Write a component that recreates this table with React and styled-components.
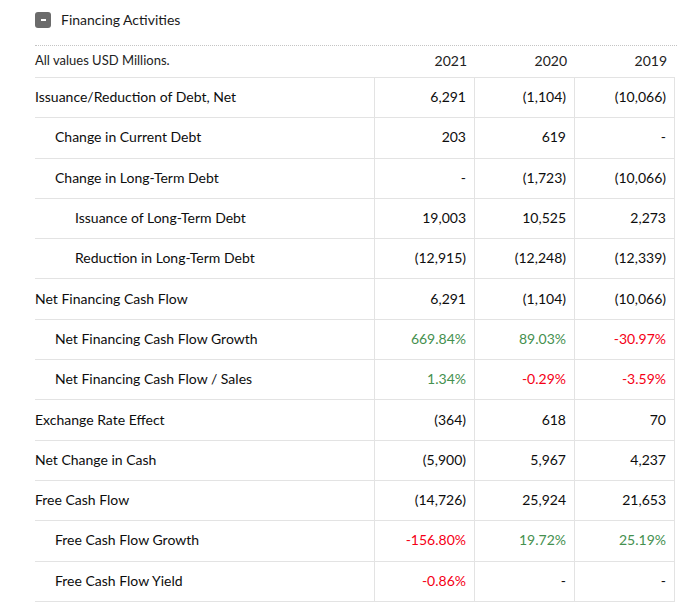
import React from "react";
import styled, { createGlobalStyle } from "styled-components";

const Global = createGlobalStyle`
  html, body { margin: 0; padding: 0; background: #fff; }
  body { font-family: Lato, "Open Sans", sans-serif; color: #111; }
`;

const Wrap = styled.div`
  padding: 10px 0 0 35px;
  width: 642px;
`;

const TitleBar = styled.div`
  display: flex;
  align-items: center;
  gap: 10px;
  height: 20px;
  padding-bottom: 15px;
  border-bottom: 1px dotted #c4c4c4;
`;

const Toggle = styled.span`
  width: 16px;
  height: 16px;
  border-radius: 3px;
  background: #6b6b6b;
  display: flex;
  align-items: center;
  justify-content: center;
  &::after {
    content: "";
    width: 5px;
    height: 2px;
    background: #fff;
  }
`;

const Title = styled.span`
  font-size: 14px;
  color: #1a1a1a;
  padding-bottom: 2px;
`;

const Table = styled.div`
  width: 640px;
  display: grid;
  grid-template-columns: 340px 100px 100px 100px;
`;

const HeadCell = styled.div`
  height: 32px;
  box-sizing: border-box;
  padding-bottom: 3px;
  display: flex;
  align-items: center;
  justify-content: ${(p) => (p.$num ? "flex-end" : "flex-start")};
  padding-right: ${(p) => (p.$num ? "8px" : "0")};
  font-size: ${(p) => (p.$num ? "14px" : "13px")};
  color: #222;
  border-bottom: 1px solid #e3e3e3;
`;

const Label = styled.div`
  height: 40.3px;
  box-sizing: border-box;
  padding-bottom: 2px;
  display: flex;
  align-items: center;
  padding-left: ${(p) => p.$level * 20}px;
  font-size: 14px;
  color: #0d0d0d;
  border-bottom: 1px solid #e3e3e3;
  border-right: 1px solid #e3e3e3;
`;

const Value = styled.div`
  height: 40.3px;
  box-sizing: border-box;
  padding-bottom: 2px;
  display: flex;
  align-items: center;
  justify-content: flex-end;
  padding-right: 8px;
  font-size: 14px;
  color: ${(p) => (p.$tone === "up" ? "#45904f" : p.$tone === "down" ? "#f50016" : "#0d0d0d")};
  border-bottom: 1px solid #e3e3e3;
  border-right: 1px solid #e3e3e3;
`;

const rows = [
  ["Issuance/Reduction of Debt, Net", 0, ["6,291", "(1,104)", "(10,066)"]],
  ["Change in Current Debt", 1, ["203", "619", "-"]],
  ["Change in Long-Term Debt", 1, ["-", "(1,723)", "(10,066)"]],
  ["Issuance of Long-Term Debt", 2, ["19,003", "10,525", "2,273"]],
  ["Reduction in Long-Term Debt", 2, ["(12,915)", "(12,248)", "(12,339)"]],
  ["Net Financing Cash Flow", 0, ["6,291", "(1,104)", "(10,066)"]],
  ["Net Financing Cash Flow Growth", 1, ["669.84%", "89.03%", "-30.97%"], true],
  ["Net Financing Cash Flow / Sales", 1, ["1.34%", "-0.29%", "-3.59%"], true],
  ["Exchange Rate Effect", 0, ["(364)", "618", "70"]],
  ["Net Change in Cash", 0, ["(5,900)", "5,967", "4,237"]],
  ["Free Cash Flow", 0, ["(14,726)", "25,924", "21,653"]],
  ["Free Cash Flow Growth", 1, ["-156.80%", "19.72%", "25.19%"], true],
  ["Free Cash Flow Yield", 1, ["-0.86%", "-", "-"], true],
];

const tone = (v, pct) => {
  if (!pct || v === "-") return undefined;
  return v.startsWith("-") ? "down" : "up";
};

export default function App() {
  return (
    <>
      <Global />
      <Wrap>
        <TitleBar>
          <Toggle />
          <Title>Financing Activities</Title>
        </TitleBar>
        <Table>
          <HeadCell>All values USD Millions.</HeadCell>
          <HeadCell $num>2021</HeadCell>
          <HeadCell $num>2020</HeadCell>
          <HeadCell $num>2019</HeadCell>
          {rows.map(([label, level, vals, pct]) => (
            <React.Fragment key={label}>
              <Label $level={level}>{label}</Label>
              {vals.map((v, i) => (
                <Value key={i} $tone={tone(v, pct)}>{v}</Value>
              ))}
            </React.Fragment>
          ))}
        </Table>
      </Wrap>
    </>
  );
}
